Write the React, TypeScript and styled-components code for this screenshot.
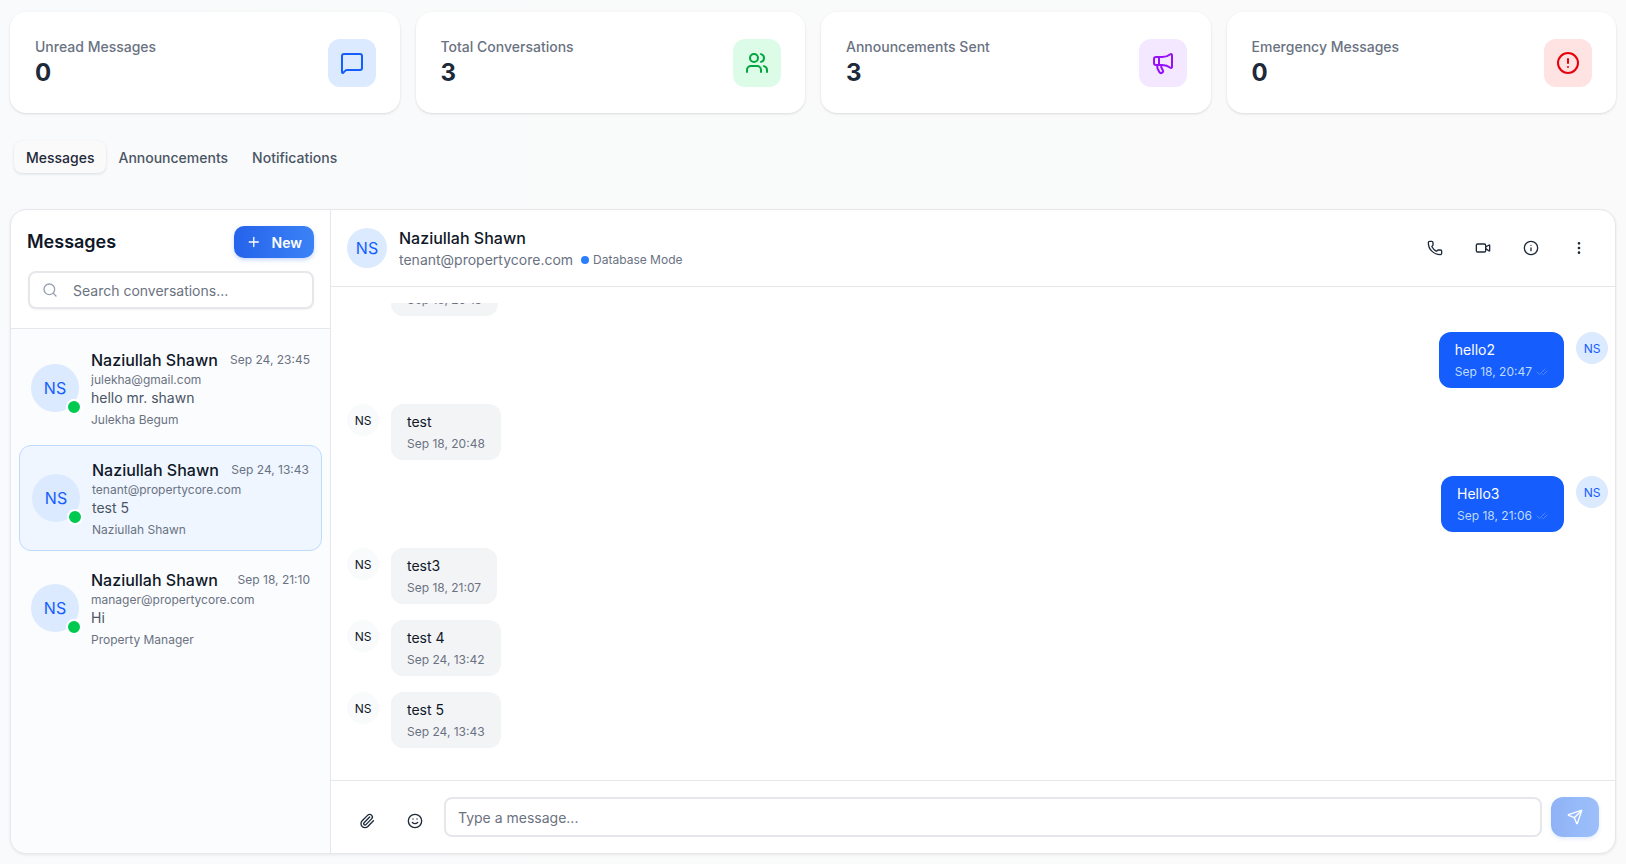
import {useLayoutEffect, useRef} from "react";
import styled, {createGlobalStyle} from "styled-components";
import {
  AlertCircle,
  CheckCheck,
  Info,
  Megaphone,
  MessageSquare,
  MoreVertical,
  Paperclip,
  Phone,
  Plus,
  Search,
  Send,
  Smile,
  Users,
  Video,
} from "lucide-react";

const GlobalStyle = createGlobalStyle`
  html, body {
    margin: 0;
    height: 100%;
    overflow: hidden;
    font-family: Inter, "Liberation Sans", sans-serif;
  }
  * {
    box-sizing: border-box;
  }
  input::placeholder {
    color: #6b7280;
    opacity: 1;
  }
`;

const stats = [
  {label: "Unread Messages", value: 0, bg: "#dbeafe", color: "#155dfc", Icon: MessageSquare},
  {label: "Total Conversations", value: 3, bg: "#dcfce7", color: "#00a63e", Icon: Users},
  {label: "Announcements Sent", value: 3, bg: "#f3e8ff", color: "#9810fa", Icon: Megaphone},
  {label: "Emergency Messages", value: 0, bg: "#ffe2e2", color: "#e7000b", Icon: AlertCircle},
];

const conversations = [
  {email: "julekha@gmail.com", time: "Sep 24, 23:45", last: "hello mr. shawn", who: "Julekha Begum", active: false},
  {email: "tenant@propertycore.com", time: "Sep 24, 13:43", last: "test 5", who: "Naziullah Shawn", active: true},
  {email: "manager@propertycore.com", time: "Sep 18, 21:10", last: "Hi", who: "Property Manager", active: false},
];

const messages = [
  {text: "hello", time: "Sep 18, 20:13", own: false},
  {text: "hello2", time: "Sep 18, 20:47", own: true},
  {text: "test", time: "Sep 18, 20:48", own: false},
  {text: "Hello3", time: "Sep 18, 21:06", own: true},
  {text: "test3", time: "Sep 18, 21:07", own: false},
  {text: "test 4", time: "Sep 24, 13:42", own: false},
  {text: "test 5", time: "Sep 24, 13:43", own: false},
];

export default function App() {
  const scroller = useRef<HTMLDivElement>(null);

  useLayoutEffect(() => {
    if (scroller.current) scroller.current.scrollTop = scroller.current.scrollHeight;
  }, []);

  return (
    <Page>
      <GlobalStyle />
      <StatGrid>
        {stats.map(({label, value, bg, color, Icon}) => (
          <StatCard key={label}>
            <div>
              <StatLabel>{label}</StatLabel>
              <StatValue>{value}</StatValue>
            </div>
            <StatIcon $bg={bg} $color={color}>
              <Icon size={24} />
            </StatIcon>
          </StatCard>
        ))}
      </StatGrid>

      <TabList>
        <Tab $active>Messages</Tab>
        <Tab>Announcements</Tab>
        <Tab>Notifications</Tab>
      </TabList>

      <Panel>
        <Sidebar>
          <SidebarHead>
            <TitleRow>
              <Title>Messages</Title>
              <NewButton>
                <Plus size={16} />
                New
              </NewButton>
            </TitleRow>
            <SearchBox>
              <Search size={16} color="#99a1af" />
              <SearchInput placeholder="Search conversations..." />
            </SearchBox>
          </SidebarHead>
          <ConversationList>
            {conversations.map((c) => (
              <Conversation key={c.email} $active={c.active}>
                <AvatarWrap>
                  <BigAvatar>NS</BigAvatar>
                  <OnlineDot />
                </AvatarWrap>
                <ConversationBody>
                  <NameRow>
                    <Name>Naziullah Shawn</Name>
                    <Time>{c.time}</Time>
                  </NameRow>
                  <Email>{c.email}</Email>
                  <LastMessage>{c.last}</LastMessage>
                  <Who>{c.who}</Who>
                </ConversationBody>
              </Conversation>
            ))}
          </ConversationList>
        </Sidebar>

        <Chat>
          <ChatHeader>
            <ChatAvatar>NS</ChatAvatar>
            <ChatInfo>
              <Name>Naziullah Shawn</Name>
              <ChatMeta>
                <ChatEmail>tenant@propertycore.com</ChatEmail>
                <ModeBadge>
                  <ModeDot />
                  Database Mode
                </ModeBadge>
              </ChatMeta>
            </ChatInfo>
            <HeaderActions>
              <IconButton><Phone size={16} /></IconButton>
              <IconButton><Video size={16} /></IconButton>
              <IconButton><Info size={16} /></IconButton>
              <IconButton><MoreVertical size={16} /></IconButton>
            </HeaderActions>
          </ChatHeader>

          <MessagePane>
            <Scroller ref={scroller}>
              {messages.map((m, i) => (
                <MessageRow key={i} $own={m.own}>
                  <SmallAvatar $own={m.own}>NS</SmallAvatar>
                  <Bubble $own={m.own}>
                    <BubbleText>{m.text}</BubbleText>
                    <BubbleMeta $own={m.own}>
                      {m.time}
                      {m.own && <CheckCheck size={12} color="#4d8bff" />}
                    </BubbleMeta>
                  </Bubble>
                </MessageRow>
              ))}
            </Scroller>
          </MessagePane>

          <Composer>
            <ComposerButton><Paperclip size={16} /></ComposerButton>
            <ComposerButton><Smile size={16} /></ComposerButton>
            <MessageInput placeholder="Type a message..." />
            <SendButton><Send size={16} /></SendButton>
          </Composer>
        </Chat>
      </Panel>
    </Page>
  );
}

const Page = styled.div`
  height: 864px;
  padding: 12px 10px 0;
  background: linear-gradient(to right, #f9fafb, #fafafa);
`;
const StatGrid = styled.div`
  display: grid;
  grid-template-columns: repeat(4, 1fr);
  gap: 16px;
`;
const StatCard = styled.div`
  display: flex;
  align-items: center;
  justify-content: space-between;
  height: 101px;
  padding: 0 24px 0 25px;
  background: #fff;
  border-radius: 16px;
  box-shadow: 0 1px 3px rgba(0, 0, 0, 0.1), 0 1px 2px -1px rgba(0, 0, 0, 0.1);
`;
const StatLabel = styled.div`
  font-size: 14px;
  line-height: 20px;
  font-weight: 500;
  color: #6a7282;
`;
const StatValue = styled.div`
  font-size: 24px;
  line-height: 32px;
  font-weight: 700;
  color: #1e2939;
`;
const StatIcon = styled.div<{$bg: string; $color: string}>`
  display: flex;
  align-items: center;
  justify-content: center;
  width: 48px;
  height: 48px;
  border-radius: 12px;
  background: ${(p) => p.$bg};
  color: ${(p) => p.$color};
`;
const TabList = styled.div`
  display: flex;
  height: 36px;
  margin: 26px 0 34px;
  padding: 2px 4px;
`;
const Tab = styled.div<{$active?: boolean}>`
  display: flex;
  align-items: center;
  height: 32px;
  padding: 0 12px;
  border-radius: 8px;
  font-size: 14px;
  font-weight: 500;
  color: ${(p) => (p.$active ? "#1e2939" : "#4a5565")};
  background: ${(p) => (p.$active ? "#fafafa" : "transparent")};
  box-shadow: ${(p) => (p.$active ? "0 1px 3px rgba(0, 0, 0, 0.12)" : "none")};
`;
const Panel = styled.div`
  display: flex;
  height: 645px;
  background: #fff;
  border: 1px solid #e5e7eb;
  border-radius: 16px;
  box-shadow: 0 1px 3px rgba(0, 0, 0, 0.08);
  overflow: hidden;
`;
const Sidebar = styled.div`
  display: flex;
  flex-direction: column;
  width: 320px;
  flex-shrink: 0;
  border-right: 1px solid #e5e7eb;
`;
const SidebarHead = styled.div`
  padding: 16px 16px 19px;
  border-bottom: 1px solid #e5e7eb;
`;
const TitleRow = styled.div`
  display: flex;
  align-items: center;
  justify-content: space-between;
  margin-bottom: 13px;
`;
const Title = styled.div`
  font-size: 18px;
  line-height: 28px;
  font-weight: 600;
  color: #101828;
`;
const NewButton = styled.button`
  display: flex;
  align-items: center;
  gap: 10px;
  width: 80px;
  height: 32px;
  padding: 0 12px;
  border: none;
  border-radius: 10px;
  background: linear-gradient(to right, #2563eb, #3b82f6);
  box-shadow: 0 2px 4px rgba(37, 99, 235, 0.25);
  color: #fff;
  font-family: inherit;
  font-size: 14px;
  font-weight: 600;
`;
const SearchBox = styled.div`
  display: flex;
  align-items: center;
  gap: 13px;
  height: 38px;
  margin-left: 1px;
  padding: 0 12px;
  background: #fff;
  border: 2px solid #e5e7eb;
  border-radius: 8px;
  box-shadow: 0 1px 2px rgba(0, 0, 0, 0.05);
`;
const SearchInput = styled.input`
  flex: 1;
  min-width: 0;
  border: none;
  outline: none;
  background: transparent;
  font-family: inherit;
  font-size: 14px;
`;
const ConversationList = styled.div`
  flex: 1;
  display: flex;
  flex-direction: column;
  gap: 4px;
  padding: 6px 8px;
  background: #fbfcfe;
`;
const Conversation = styled.div<{$active: boolean}>`
  display: flex;
  align-items: center;
  gap: 12px;
  padding: ${(p) => (p.$active ? "12px" : "13px 12px")};
  border-radius: 12px;
  background: ${(p) => (p.$active ? "#eff6ff" : "transparent")};
  border: ${(p) => (p.$active ? "1px solid #bedbff" : "none")};
`;
const AvatarWrap = styled.div`
  position: relative;
  flex-shrink: 0;
`;
const BigAvatar = styled.div`
  display: flex;
  align-items: center;
  justify-content: center;
  width: 48px;
  height: 48px;
  border-radius: 50%;
  background: #dbeafe;
  color: #155dfc;
  font-size: 16px;
`;
const OnlineDot = styled.span`
  position: absolute;
  right: -3px;
  bottom: -3px;
  width: 16px;
  height: 16px;
  border-radius: 50%;
  background: #00c950;
  border: 2px solid #fff;
`;
const ConversationBody = styled.div`
  flex: 1;
  min-width: 0;
`;
const NameRow = styled.div`
  display: flex;
  align-items: center;
  justify-content: space-between;
`;
const Name = styled.div`
  font-size: 16px;
  line-height: 24px;
  font-weight: 500;
  color: #101828;
`;
const Time = styled.div`
  font-size: 12px;
  line-height: 16px;
  color: #6a7282;
`;
const Email = styled.div`
  font-size: 12px;
  line-height: 16px;
  color: #6a7282;
`;
const LastMessage = styled.div`
  font-size: 14px;
  line-height: 20px;
  color: #4a5565;
`;
const Who = styled.div`
  margin-top: 4px;
  font-size: 12px;
  line-height: 16px;
  color: #6a7282;
`;
const Chat = styled.div`
  flex: 1;
  min-width: 0;
  display: flex;
  flex-direction: column;
`;
const ChatHeader = styled.div`
  display: flex;
  align-items: center;
  gap: 12px;
  height: 77px;
  padding: 0 16px;
  border-bottom: 1px solid #e5e7eb;
`;
const ChatAvatar = styled(BigAvatar)`
  width: 40px;
  height: 40px;
`;
const ChatInfo = styled.div`
  flex: 1;
  min-width: 0;
`;
const ChatMeta = styled.div`
  display: flex;
  align-items: center;
  gap: 8px;
`;
const ChatEmail = styled.span`
  font-size: 14px;
  line-height: 20px;
  color: #6a7282;
`;
const ModeBadge = styled.span`
  display: flex;
  align-items: center;
  gap: 4px;
  font-size: 12px;
  line-height: 16px;
  color: #6a7282;
`;
const ModeDot = styled.span`
  width: 8px;
  height: 8px;
  border-radius: 50%;
  background: #2b7fff;
`;
const HeaderActions = styled.div`
  display: flex;
  gap: 8px;
`;
const IconButton = styled.button`
  display: flex;
  align-items: center;
  justify-content: center;
  width: 40px;
  height: 40px;
  padding: 0;
  border: none;
  border-radius: 8px;
  background: transparent;
  color: #1e2939;
`;
const MessagePane = styled.div`
  flex: 1;
  min-height: 0;
  display: flex;
  padding-top: 16px;
`;
const Scroller = styled.div`
  flex: 1;
  display: flex;
  flex-direction: column;
  gap: 16px;
  padding: 58px 7px 32px 16px;
  overflow-y: scroll;

  &::-webkit-scrollbar {
    width: 8px;
  }
  &::-webkit-scrollbar-thumb {
    background: #e5e7eb;
    border-radius: 4px;
  }
`;
const MessageRow = styled.div<{$own: boolean}>`
  display: flex;
  flex-direction: ${(p) => (p.$own ? "row-reverse" : "row")};
  align-items: flex-start;
  gap: 12px;
  flex-shrink: 0;
`;
const SmallAvatar = styled.div<{$own: boolean}>`
  display: flex;
  align-items: center;
  justify-content: center;
  width: 32px;
  height: 32px;
  border-radius: 50%;
  font-size: 12px;
  background: ${(p) => (p.$own ? "#dbeafe" : "#f9fafb")};
  color: ${(p) => (p.$own ? "#155dfc" : "#101828")};
`;
const Bubble = styled.div<{$own: boolean}>`
  padding: 8px 16px;
  border-radius: 12px;
  background: ${(p) => (p.$own ? "#155dfc" : "#f3f4f6")};
  color: ${(p) => (p.$own ? "#fff" : "#101828")};
`;
const BubbleText = styled.div`
  font-size: 14px;
  line-height: 20px;
`;
const BubbleMeta = styled.div<{$own: boolean}>`
  display: flex;
  align-items: center;
  gap: 4px;
  margin-top: 4px;
  font-size: 12px;
  line-height: 16px;
  color: ${(p) => (p.$own ? "#bedbff" : "#6a7282")};
`;
const Composer = styled.div`
  display: flex;
  align-items: flex-start;
  gap: 8px;
  height: 73px;
  padding: 16px 16px 0;
  border-top: 1px solid #e5e7eb;
`;
const ComposerButton = styled(IconButton)`
  margin-top: 4px;
`;
const MessageInput = styled.input`
  flex: 1;
  min-width: 0;
  height: 40px;
  margin: 0 1px 0 1px;
  padding: 0 12px;
  border: 2px solid #e5e7eb;
  border-radius: 8px;
  outline: none;
  font-family: inherit;
  font-size: 14px;
`;
const SendButton = styled.button`
  display: flex;
  align-items: center;
  justify-content: center;
  width: 48px;
  height: 40px;
  padding: 0;
  border: none;
  border-radius: 12px;
  background: linear-gradient(to right, #8fb2f6, #9dc0fb);
  box-shadow: 0 2px 4px rgba(37, 99, 235, 0.12);
  color: #fff;
`;
